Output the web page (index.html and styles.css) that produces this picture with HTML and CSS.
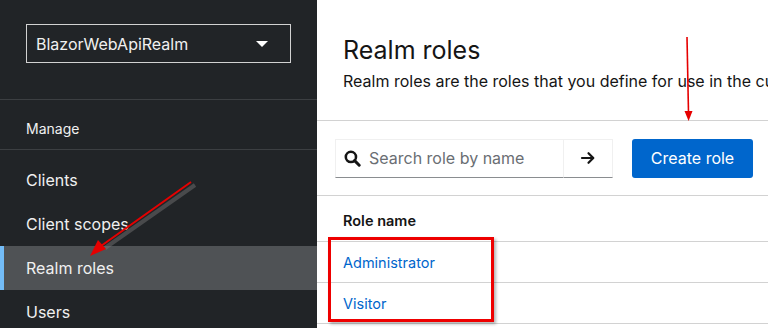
FILE: index.html
```html
<!DOCTYPE html>
<html lang="en">
<head>
<meta charset="utf-8">
<title>Realm roles</title>
<link rel="stylesheet" href="styles.css">
</head>
<body>
<div class="app">
  <nav class="sidebar">
    <div class="realm-select">
      <span class="realm-name">BlazorWebApiRealm</span>
      <span class="caret"></span>
    </div>
    <div class="nav-section">Manage</div>
    <ul class="nav-list">
      <li class="nav-item">Clients</li>
      <li class="nav-item">Client scopes</li>
      <li class="nav-item active">Realm roles</li>
      <li class="nav-item">Users</li>
    </ul>
  </nav>
  <main class="main">
    <header class="page-header">
      <h1 class="title">Realm roles</h1>
      <p class="subtitle">Realm roles are the roles that you define for use in the current realm.</p>
    </header>
    <div class="toolbar">
      <div class="search-group">
        <div class="search-input">
          <svg class="search-icon" viewBox="0 0 16 16" width="17" height="17"><circle cx="6.5" cy="6.5" r="4.8" fill="none" stroke="#151515" stroke-width="2.4"/><path d="M10 10l4.3 4.3" stroke="#151515" stroke-width="2.8" stroke-linecap="round"/></svg>
          <span class="placeholder">Search role by name</span>
        </div>
        <div class="search-btn">
          <svg viewBox="0 0 16 16" width="16" height="16"><path d="M2 8h11M8.5 3.2L13.3 8l-4.8 4.8" fill="none" stroke="#151515" stroke-width="2.2" stroke-linecap="round" stroke-linejoin="round"/></svg>
        </div>
      </div>
      <button class="btn-primary">Create role</button>
    </div>
    <div class="table">
      <div class="th">Role name</div>
      <div class="td"><a class="link">Administrator</a></div>
      <div class="td"><a class="link">Visitor</a></div>
    </div>
    <div class="annot-box"></div>
    <svg class="annot-arrow-main" width="20" height="100" viewBox="0 0 20 100"><path d="M9 2 L10.5 78" stroke="#e60000" stroke-width="1.6" fill="none"/><path d="M6.5 76 L14.5 76 L10.6 86 Z" fill="#e60000"/></svg>
  </main>
  <svg class="annot-arrow-side" width="130" height="95" viewBox="0 0 130 95"><path d="M120 7 L30 70" stroke="#7a7a7a" stroke-opacity="0.45" stroke-width="4" fill="none"/><path d="M116 4 L26 68" stroke="#e60000" stroke-width="2" fill="none"/><path d="M15 78 L23 62 L31 71 Z" fill="#e60000"/></svg>
</div>
</body>
</html>
```
FILE: styles.css
```css
* { box-sizing: border-box; }
html, body { margin: 0; padding: 0; }
body {
  font-family: "Inter", "Open Sans", sans-serif;
  width: 768px;
  height: 328px;
  overflow: hidden;
  background: #fff;
}
.app {
  display: flex;
  height: 328px;
  position: relative;
}
.sidebar {
  width: 317px;
  flex: none;
  background: #212427;
  color: #fff;
  padding-top: 24px;
}
.realm-select {
  margin: 0 26px;
  height: 39px;
  border: 1px solid #d2d2d2;
  display: flex;
  align-items: center;
  justify-content: space-between;
  padding: 0 22px 0 9px;
  font-size: 16px;
  color: #f0f0f0;
}
.caret {
  width: 0;
  height: 0;
  border-left: 6px solid transparent;
  border-right: 6px solid transparent;
  border-top: 6px solid #fff;
}
.nav-section {
  margin-top: 36px;
  border-top: 1px solid #3c3f42;
  border-bottom: 1px solid #3c3f42;
  height: 51px;
  padding: 20px 26px 0;
  font-size: 14px;
  color: #f0f0f0;
}
.nav-list {
  list-style: none;
  margin: 0;
  padding: 8px 0 0;
}
.nav-item {
  height: 44px;
  display: flex;
  align-items: center;
  font-size: 16px;
  color: #f0f0f0;
  border-left: 4px solid transparent;
  padding-left: 22px;
}
.nav-item.active {
  background: #4f5255;
  border-left-color: #73bcf7;
}
.main {
  flex: 1;
  min-width: 0;
  position: relative;
  overflow: hidden;
}
.page-header {
  padding: 35px 26px 0;
  height: 121px;
  border-bottom: 1px solid #d2d2d2;
}
.title {
  margin: 0;
  font-size: 25px;
  font-weight: 400;
  line-height: 30px;
  color: #151515;
}
.subtitle {
  margin: 4px 0 0;
  font-size: 16px;
  line-height: 24px;
  color: #151515;
  white-space: nowrap;
}
.toolbar {
  display: flex;
  align-items: center;
  gap: 19px;
  height: 75px;
  padding: 0 0 0 18px;
  border-bottom: 1px solid #d2d2d2;
}
.search-group {
  display: flex;
  flex: none;
  height: 39px;
  width: 278px;
}
.search-input {
  flex: 1;
  display: flex;
  align-items: center;
  gap: 8px;
  padding-left: 8px;
  border: 1px solid #f0f0f0;
  border-bottom-color: #8a8d90;
  border-right: none;
}
.search-icon { flex: none; }
.placeholder {
  font-size: 16px;
  color: #6a6e73;
}
.search-btn {
  width: 50px;
  display: flex;
  align-items: center;
  justify-content: center;
  border: 1px solid #f0f0f0;
  border-bottom-color: #8a8d90;
}
.btn-primary {
  flex: none;
  height: 39px;
  width: 121px;
  border: none;
  border-radius: 3px;
  background: #0066cc;
  color: #fff;
  font-family: inherit;
  font-size: 16px;
  padding: 0;
}
.table {
  display: flex;
  flex-direction: column;
}
.th {
  height: 46px;
  display: flex;
  align-items: center;
  padding: 4px 0 0 26px;
  font-size: 14.5px;
  font-weight: 600;
  color: #151515;
  border-bottom: 1px solid #d2d2d2;
}
.td {
  height: 41px;
  display: flex;
  align-items: center;
  padding-left: 26px;
  font-size: 14.5px;
  border-bottom: 1px solid #d2d2d2;
}
.link {
  color: #0066cc;
  text-decoration: none;
}
.annot-box {
  position: absolute;
  left: 11px;
  top: 237px;
  width: 166px;
  height: 85px;
  border: 3px solid #ee0000;
  box-shadow: 2px 2px 3px rgba(0,0,0,0.3);
}
.annot-arrow-main {
  position: absolute;
  left: 361px;
  top: 35px;
}
.annot-arrow-side {
  position: absolute;
  left: 75px;
  top: 178px;
}
```
